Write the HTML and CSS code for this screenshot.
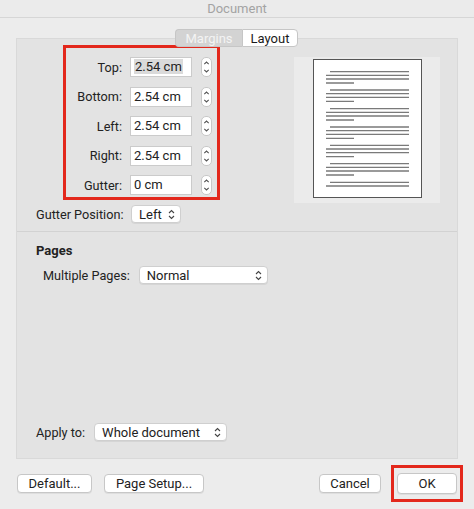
FILE: index.html
```html
<!DOCTYPE html>
<html>
<head>
<meta charset="utf-8">
<link rel="stylesheet" href="styles.css">
</head>
<body>
<div class="titlebar">Document</div>
<div class="content">
  <div class="tabs">
    <div class="seg seg-off">Margins</div>
    <div class="seg seg-on">Layout</div>
  </div>
  <div class="panel">
    <div class="top">
      <div class="leftcol">
        <div class="redbox">
          <div class="mrow"><span class="lbl">Top:</span><span class="field"><span class="sel">2.54 cm</span></span><span class="stepper"><svg width="11" height="20" viewBox="0 0 11 20"><path d="M3.3 7.2 L5.5 5 L7.7 7.2 M3.3 12.8 L5.5 15 L7.7 12.8" fill="none" stroke="#555" stroke-width="1.1"/></svg></span></div>
          <div class="mrow"><span class="lbl">Bottom:</span><span class="field">2.54 cm</span><span class="stepper"><svg width="11" height="20" viewBox="0 0 11 20"><path d="M3.3 7.2 L5.5 5 L7.7 7.2 M3.3 12.8 L5.5 15 L7.7 12.8" fill="none" stroke="#555" stroke-width="1.1"/></svg></span></div>
          <div class="mrow"><span class="lbl">Left:</span><span class="field">2.54 cm</span><span class="stepper"><svg width="11" height="20" viewBox="0 0 11 20"><path d="M3.3 7.2 L5.5 5 L7.7 7.2 M3.3 12.8 L5.5 15 L7.7 12.8" fill="none" stroke="#555" stroke-width="1.1"/></svg></span></div>
          <div class="mrow"><span class="lbl">Right:</span><span class="field">2.54 cm</span><span class="stepper"><svg width="11" height="20" viewBox="0 0 11 20"><path d="M3.3 7.2 L5.5 5 L7.7 7.2 M3.3 12.8 L5.5 15 L7.7 12.8" fill="none" stroke="#555" stroke-width="1.1"/></svg></span></div>
          <div class="mrow"><span class="lbl">Gutter:</span><span class="field">0 cm</span><span class="stepper"><svg width="11" height="20" viewBox="0 0 11 20"><path d="M3.3 7.2 L5.5 5 L7.7 7.2 M3.3 12.8 L5.5 15 L7.7 12.8" fill="none" stroke="#555" stroke-width="1.1"/></svg></span></div>
        </div>
        <div class="grow">
          <span class="glbl">Gutter Position:</span>
          <span class="popup pop-gutter"><span>Left</span><svg class="chev" width="7" height="11" viewBox="0 0 7 11"><path d="M1 4 L3.5 1.5 L6 4 M1 7 L3.5 9.5 L6 7" fill="none" stroke="#444" stroke-width="1.1"/></svg></span>
        </div>
      </div>
      <div class="preview">
        <svg class="page" width="109" height="139" viewBox="0 0 109 139">
          <rect x="0.5" y="0.5" width="108" height="138" fill="#fff" stroke="#555" stroke-width="1"/>
          <g stroke="#7a7a7a" stroke-width="1.3">
            <path d="M17 12.7H96 M13 16.4H96 M13 20H96 M13 24H41"/>
            <path d="M17 31H96 M13 34.7H96 M13 38.3H96 M13 42.3H41"/>
            <path d="M17 49.7H96 M13 53.4H96 M13 57H96 M13 61H41"/>
            <path d="M17 68H96 M13 71.7H96 M13 75.3H96 M13 79.3H41"/>
            <path d="M17 86.3H96 M13 90H96 M13 93.6H96 M13 97.6H41"/>
            <path d="M17 104.7H96 M13 108.4H96 M13 112H96 M13 116H41"/>
            <path d="M17 123.3H96 M13 127H96"/>
          </g>
        </svg>
      </div>
    </div>
    <div class="sep"></div>
    <div class="heading">Pages</div>
    <div class="prow">
      <span class="plbl">Multiple Pages:</span>
      <span class="popup pop-pages"><span>Normal</span><svg class="chev" width="7" height="11" viewBox="0 0 7 11"><path d="M1 4 L3.5 1.5 L6 4 M1 7 L3.5 9.5 L6 7" fill="none" stroke="#444" stroke-width="1.1"/></svg></span>
    </div>
    <div class="arow">
      <span class="albl">Apply to:</span>
      <span class="popup pop-apply"><span>Whole document</span><svg class="chev" width="7" height="11" viewBox="0 0 7 11"><path d="M1 4 L3.5 1.5 L6 4 M1 7 L3.5 9.5 L6 7" fill="none" stroke="#444" stroke-width="1.1"/></svg></span>
    </div>
  </div>
  <div class="buttons">
    <span class="btn btn-default">Default...</span>
    <span class="btn btn-setup">Page Setup...</span>
    <span class="spacer"></span>
    <span class="btn btn-cancel">Cancel</span>
    <span class="okbox"><span class="btn btn-ok">OK</span></span>
  </div>
</div>
</body>
</html>
```
FILE: styles.css
```css
* { box-sizing: border-box; }
html, body { margin: 0; padding: 0; }
body {
  width: 474px;
  height: 509px;
  background: #ececec;
  font-family: Roboto, "Liberation Sans", Arial, sans-serif;
  font-size: 12.7px;
  color: #222;
  overflow: hidden;
  white-space: nowrap;
}
.titlebar {
  height: 18px;
  line-height: 17px;
  text-align: center;
  color: #a3a3a3;
  background: #ebebeb;
  border-bottom: 1px solid #d6d6d6;
  font-size: 13px;
}
.content {
  padding: 0 16px;
}
.tabs {
  display: flex;
  justify-content: center;
  margin-top: 11px;
  margin-bottom: -9px;
  position: relative;
  z-index: 1;
  padding-right: 1px;
}
.seg {
  height: 18px;
  line-height: 17px;
  font-size: 13px;
  text-align: center;
  border: 1px solid #c6c6c6;
}
.seg-off {
  width: 67px;
  background: #d3d3d3;
  color: #f4f4f4;
  border-radius: 4px 0 0 4px;
  border-right: none;
}
.seg-on {
  width: 56px;
  background: #fff;
  color: #1a1a1a;
  border-radius: 0 4px 4px 0;
}
.panel {
  height: 421px;
  background: #e3e3e3;
  border: 1px solid #d9d9d9;
  padding-top: 6px;
  display: flex;
  flex-direction: column;
}
.top {
  display: flex;
  align-items: flex-start;
  justify-content: space-between;
  padding-right: 17px;
}
.leftcol {
  padding-left: 19px;
}
.redbox {
  margin-left: 27px;
  width: 157px;
  height: 155px;
  border: 3px solid #e3281c;
  padding-top: 9px;
  display: flex;
  flex-direction: column;
  gap: 9.5px;
}
.mrow {
  display: flex;
  align-items: center;
  height: 20px;
}
.lbl {
  width: 56px;
  text-align: right;
  margin-right: 8px;
}
.field {
  width: 62px;
  height: 20px;
  background: #fff;
  border: 1px solid #cbcbcb;
  padding-left: 3px;
  line-height: 18px;
  margin-right: 9px;
  font-size: 13px;
}
.sel {
  background: #dadada;
  padding: 0 1px;
}
.stepper {
  width: 11px;
  height: 20px;
  background: #fff;
  border: 1px solid #c8c8c8;
  border-radius: 5px;
  display: flex;
  align-items: center;
  justify-content: center;
  overflow: hidden;
}
.stepper svg { flex: none; }
.grow {
  display: flex;
  align-items: center;
  margin-top: 5px;
}
.glbl {
  flex: none;
  width: 86px;
  text-align: right;
  margin-right: 9px;
}
.popup {
  flex: none;
  display: flex;
  align-items: center;
  justify-content: space-between;
  height: 18px;
  background: #fff;
  border: 1px solid #cfcfcf;
  border-radius: 4px;
  box-shadow: 0 1px 0 rgba(0,0,0,0.06);
  padding: 0 5px 0 7px;
  font-size: 13px;
}
.pop-gutter { width: 50px; }
.pop-pages { width: 129px; }
.pop-apply { width: 133px; }
.preview {
  margin-top: 12px;
  width: 146px;
  height: 146px;
  background: #ebebeb;
  display: flex;
  justify-content: center;
  padding-top: 2px;
}
.page { display: block; }
.sep {
  margin-top: 8px;
  border-top: 1px solid #d2d2d2;
}
.heading {
  margin-top: 11px;
  margin-left: 19px;
  font-weight: bold;
  line-height: 16px;
  font-size: 13px;
}
.prow {
  display: flex;
  align-items: center;
  margin-top: 7px;
  padding-left: 26px;
}
.plbl {
  margin-right: 9px;
}
.arow {
  display: flex;
  align-items: center;
  margin-top: auto;
  margin-bottom: 17px;
  padding-left: 19px;
}
.albl {
  margin-right: 9px;
}
.buttons {
  display: flex;
  align-items: center;
  margin-top: 6px;
  margin-right: -5px;
  padding-left: 1px;
}
.btn {
  display: flex;
  align-items: center;
  justify-content: center;
  height: 19px;
  background: #fff;
  border: 1px solid #c7c7c7;
  border-radius: 4px;
  box-shadow: 0 1px 0 rgba(0,0,0,0.06);
  font-size: 13px;
}
.btn-default { width: 75px; }
.btn-setup { width: 100px; margin-left: 12px; }
.spacer { flex: 1; }
.btn-cancel { width: 62px; margin-right: 10px; }
.okbox {
  border: 3px solid #e3281c;
  padding: 5px 3px;
}
.btn-ok { width: 60px; height: 21px; }
```
